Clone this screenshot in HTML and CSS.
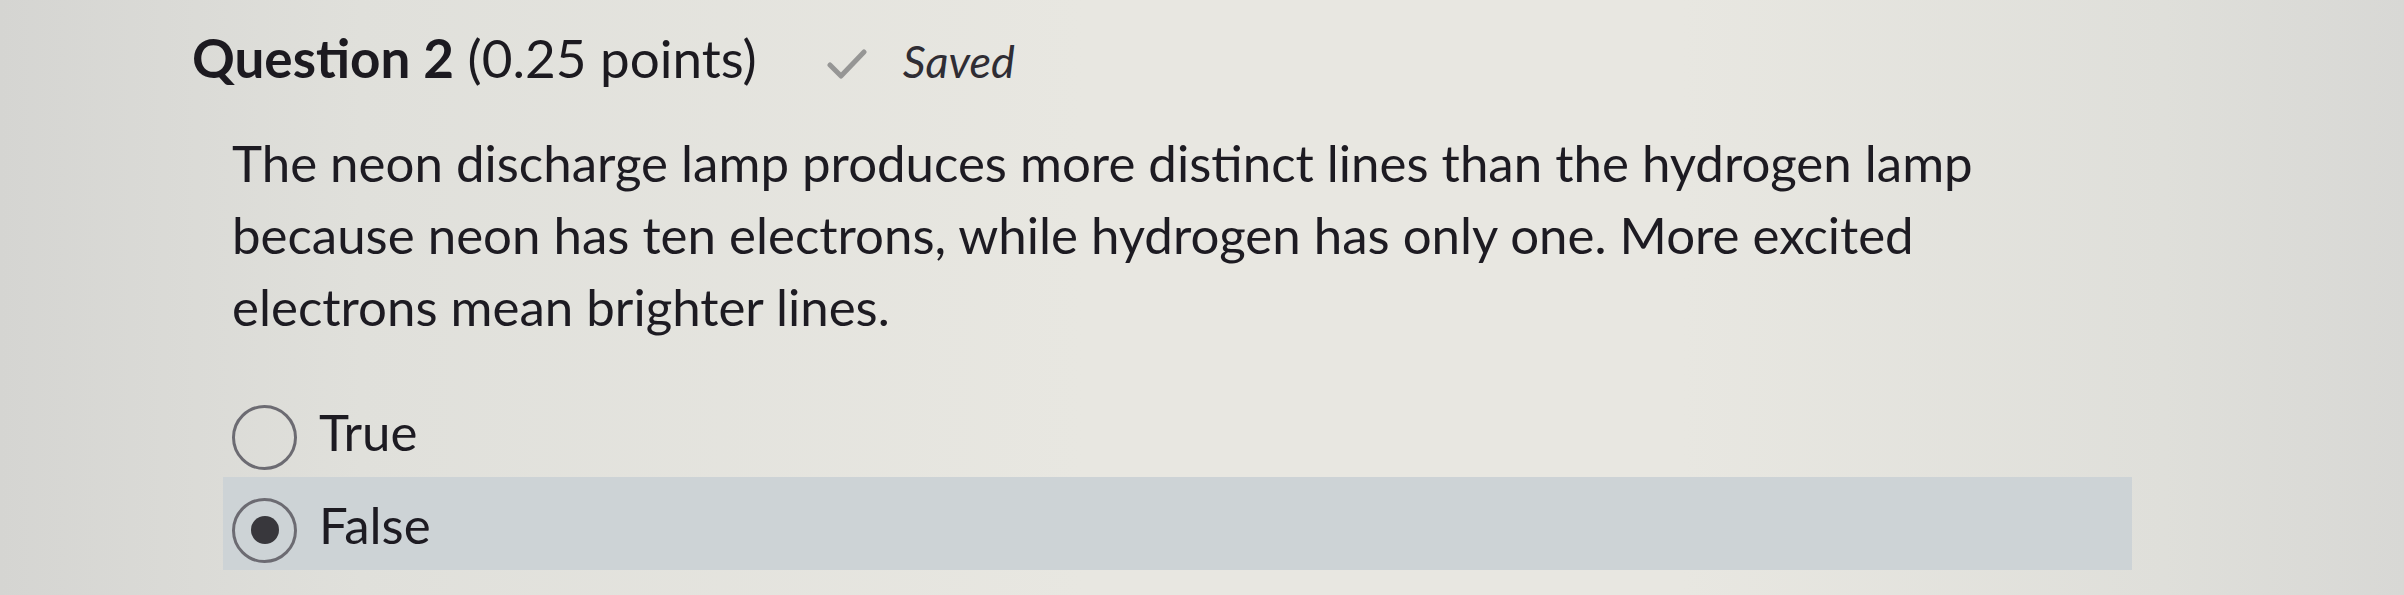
FILE: index.html
```html
<!DOCTYPE html>
<html lang="en">
<head>
    <meta charset="UTF-8">
    <meta name="viewport" content="width=device-width, initial-scale=1.0">
    <title>Question 2</title>
    <link rel="stylesheet" href="styles.css">
</head>
<body>

    <div class="question">
        <div class="question-header">
            <h2 class="question-title"><strong>Question 2</strong> (0.25 points)</h2>
            <span class="save-status">
                <svg class="save-check" width="40" height="30" viewBox="0 0 40 30">
                    <path d="M3 16 L14 27 L37 3" fill="none" stroke="#969695" stroke-width="5" stroke-linecap="round" stroke-linejoin="round"/>
                </svg>
                <em>Saved</em>
            </span>
        </div>

        <p class="question-text">The neon discharge lamp produces more distinct lines than the hydrogen lamp because neon has ten electrons, while hydrogen has only one. More excited electrons mean brighter lines.</p>

        <div class="choices">
            <label class="choice">
                <span class="radio"></span>
                <span class="choice-label">True</span>
            </label>
            <label class="choice selected">
                <span class="radio checked"></span>
                <span class="choice-label">False</span>
            </label>
        </div>
    </div>

</body>
</html>
```

FILE: styles.css
```css
body {
    margin: 0;
    height: 595px;
    overflow: hidden;
    font-family: Lato, "Open Sans", sans-serif;
    color: #1d1b22;
    background: linear-gradient(to right, #d5d5d2 0%, #e0e0db 15%, #e8e7e1 45%, #e8e7e1 70%, #dfdfda 90%, #d8d8d5 100%);
}
.question {
    padding: 26px 0 0 192px;
}
.question-header {
    display: flex;
    align-items: baseline;
}
.question-title {
    margin: 0;
    font-size: 53px;
    font-weight: 400;
    line-height: 1.2;
    color: #1c1a20;
}
.question-title strong {
    font-weight: 700;
}
.save-status {
    display: flex;
    align-items: baseline;
    margin-left: 70px;
    font-size: 45px;
    color: #2f2d34;
}
.save-check {
    margin-right: 36px;
    align-self: center;
    position: relative;
    top: 3px;
}
.question-text {
    width: 1800px;
    margin: 37px 0 0 40px;
    font-size: 51px;
    line-height: 72px;
}
.choices {
    margin-top: 41px;
    margin-left: 31px;
    width: 1909px;
}
.choice {
    display: flex;
    align-items: center;
    box-sizing: border-box;
    height: 93px;
    padding: 14px 0 0 9px;
}
.choice.selected {
    background-color: #cdd3d6;
}
.radio {
    box-sizing: border-box;
    width: 65px;
    height: 65px;
    border: 3px solid #6c6b72;
    border-radius: 50%;
    display: flex;
    align-items: center;
    justify-content: center;
    background: transparent;
}
.radio.checked::after {
    content: "";
    width: 28px;
    height: 28px;
    border-radius: 50%;
    background: #38373c;
}
.choice-label {
    margin-left: 22px;
    margin-bottom: 12px;
    font-size: 51px;
    line-height: 1.2;
}
```
